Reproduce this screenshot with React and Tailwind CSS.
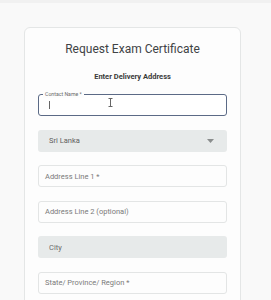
export default function App() {
  const field = 'h-[22px] w-full rounded-[3px] border border-[#e3e5e5] bg-[#fdfdfd] flex items-center px-[6px] text-[7.5px] text-[#7a7a7a]'
  const filled = 'h-[22px] w-full rounded-[3px] bg-[#e7eaea] flex items-center px-[11px] text-[7.5px] text-[#6d6d6d]'

  return (
    <div className="w-[271px] h-[300px] overflow-hidden bg-[#f9f9f9] font-['Roboto',sans-serif]">
      <div className="h-[3px] bg-[#f1f1f1]" />
      <div className="ml-[24px] mt-[24px] w-[217px] h-[300px] rounded-[6px] border border-[#e4e6e6] bg-[#fdfdfd]">
        <h1 className="mt-[11px] text-center text-[12px] text-[#3f4345] leading-[20px]">Request Exam Certificate</h1>
        <p className="mt-[13px] text-center text-[7.5px] font-bold text-[#3b3b3b] leading-[10px]">Enter Delivery Address</p>

        <div className="mt-[12px] px-[13px] flex flex-col gap-[13.6px]">
          {/* Contact name, focused */}
          <div className="relative h-[22px] w-full rounded-[3px] border-[1.5px] border-[#5b6a86] bg-white flex items-center px-[10px]">
            <span className="absolute -top-[5px] left-[4px] bg-[#fdfdfd] px-[2px] text-[5.2px] leading-[8px] text-[#6b6b6b]">Contact Name *</span>
            <span className="w-[1px] h-[8px] bg-[#666]" />
            <svg width="5" height="9" viewBox="0 0 5 9" className="absolute left-[69px] top-[3px]">
              <path d="M0.5 0.5h4M2.5 0.5v8M0.5 8.5h4" stroke="#666" strokeWidth="1" fill="none" />
            </svg>
          </div>

          {/* Country select */}
          <div className={filled + ' justify-between'}>
            <span className="text-[#5f6060]">Sri Lanka</span>
            <svg width="7" height="4" viewBox="0 0 7 4" className="mr-[2px]">
              <path d="M0 0h7L3.5 4z" fill="#8a8d8d" />
            </svg>
          </div>

          <div className={field}>Address Line 1 *</div>
          <div className={field}>Address Line 2 (optional)</div>
          <div className={filled}>City</div>
          <div className={field}>State/ Province/ Region *</div>
        </div>
      </div>
    </div>
  )
}
